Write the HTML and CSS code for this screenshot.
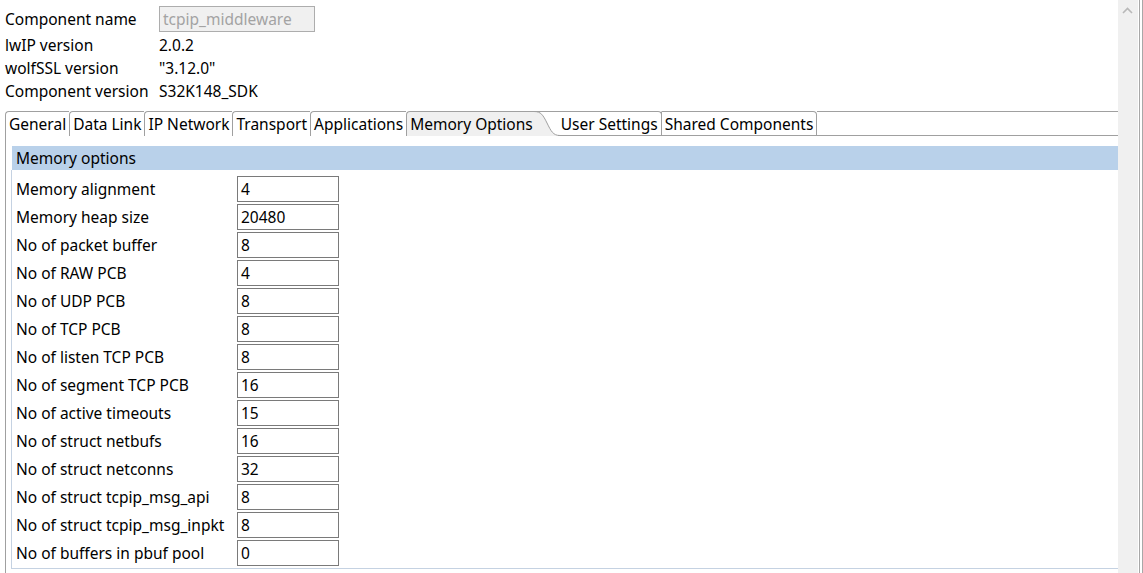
FILE: index.html
```html
<!DOCTYPE html>
<html>
<head>
<meta charset="utf-8">
<link rel="stylesheet" href="styles.css">
</head>
<body>
<div class="page">
  <div class="content">
    <div class="info">
      <div class="info-label">Component name</div>
      <div class="info-value"><div class="readonly">tcpip_middleware</div></div>
      <div class="info-label">lwIP version</div>
      <div class="info-value">2.0.2</div>
      <div class="info-label">wolfSSL version</div>
      <div class="info-value">"3.12.0"</div>
      <div class="info-label">Component version</div>
      <div class="info-value">S32K148_SDK</div>
    </div>
    <div class="tabs">
      <div class="tab tab-left">General</div>
      <div class="tab tab-left">Data Link</div>
      <div class="tab tab-left">IP Network</div>
      <div class="tab tab-left">Transport</div>
      <div class="tab tab-left">Applications</div>
      <div class="tab tab-selected">Memory Options</div>
      <svg class="tab-curve" width="29" height="25" viewBox="0 0 29 25"><path d="M0 0.5 H1 C8 0.5 10 4 14 12 C18 20 20 24.5 27 24.5 H29 V25 H0 Z" fill="#f0f0f0"/><path d="M0 0.5 H1 C8 0.5 10 4 14 12 C18 20 20 24.5 27 24.5 H29" fill="none" stroke="#a0a0a0" stroke-width="1"/></svg>
      <div class="tab tab-right tab-after-selected">User Settings</div>
      <div class="tab tab-right">Shared Components</div>
      <div class="tab-filler"></div>
    </div>
    <div class="panel">
      <div class="section">
        <div class="section-head">Memory options</div>
        <div class="section-body">
          <div class="field-label">Memory alignment</div><div class="field">4</div>
          <div class="field-label">Memory heap size</div><div class="field">20480</div>
          <div class="field-label">No of packet buffer</div><div class="field">8</div>
          <div class="field-label">No of RAW PCB</div><div class="field">4</div>
          <div class="field-label">No of UDP PCB</div><div class="field">8</div>
          <div class="field-label">No of TCP PCB</div><div class="field">8</div>
          <div class="field-label">No of listen TCP PCB</div><div class="field">8</div>
          <div class="field-label">No of segment TCP PCB</div><div class="field">16</div>
          <div class="field-label">No of active timeouts</div><div class="field">15</div>
          <div class="field-label">No of struct netbufs</div><div class="field">16</div>
          <div class="field-label">No of struct netconns</div><div class="field">32</div>
          <div class="field-label">No of struct tcpip_msg_api</div><div class="field">8</div>
          <div class="field-label">No of struct tcpip_msg_inpkt</div><div class="field">8</div>
          <div class="field-label">No of buffers in pbuf pool</div><div class="field">0</div>
        </div>
      </div>
    </div>
  </div>
  <div class="vscroll">
    <svg class="arrow-up" width="11" height="7" viewBox="0 0 11 7"><path d="M1 6 L5.5 1.5 L10 6" fill="none" stroke="#b8b8b8" stroke-width="1.6"/></svg>
  </div>
  <div class="edge"></div>
</div>
</body>
</html>
```

FILE: styles.css
```css
html, body {
  margin: 0;
  padding: 0;
  background: #ffffff;
}
body {
  font-family: "Noto Sans", "Open Sans", sans-serif;
  font-size: 15.5px;
  color: #000;
  overflow: hidden;
}
.page {
  display: flex;
  width: 1143px;
  height: 573px;
  overflow: hidden;
}
.content {
  width: 1118px;
  flex: none;
  overflow: hidden;
}
.vscroll {
  width: 20px;
  flex: none;
  background: #f0f0f0;
  display: flex;
  justify-content: center;
  padding-top: 7px;
  box-sizing: border-box;
}
.arrow-up {
  display: block;
  margin-left: -1px;
}
.edge {
  flex: none;
  box-sizing: border-box;
  border-left: 1px solid #a8a8a8;
  border-right: 1px solid #a8a8a8;
  margin-left: 1px;
  width: 4px;
}
.info {
  display: grid;
  grid-template-columns: 154px 1fr;
  grid-template-rows: 28px 23px 23px 23px;
  padding: 6px 0 0 5px;
  align-items: center;
}
.info-label, .info-value {
  line-height: 23px;
  white-space: nowrap;
}
.info-label:first-child {
  margin-top: -1px;
}
.readonly {
  width: 156px;
  height: 26px;
  box-sizing: border-box;
  border: 1px solid #adadad;
  background: #f0f0f0;
  color: #a3a3a3;
  padding: 0 3px;
  line-height: 24px;
  margin-top: -2px;
}
.tabs {
  display: flex;
  margin: 8px 0 0 5px;
  height: 25px;
  align-items: stretch;
}
.tab {
  box-sizing: border-box;
  border-top: 1px solid #a0a0a0;
  line-height: 24px;
  white-space: nowrap;
  padding: 0 3px 0 3px;
}
.tab-left {
  border-left: 1px solid #a0a0a0;
  border-top-left-radius: 4px;
}
.tab-selected {
  border-left: 1px solid #a0a0a0;
  border-top-left-radius: 4px;
  background: #f0f0f0;
  padding-right: 0;
}
.tab-curve {
  display: block;
  flex: none;
}
.tab-right {
  border-right: 1px solid #a0a0a0;
  border-bottom: 1px solid #a0a0a0;
  border-top-right-radius: 4px;
}
.tab-after-selected {
  margin-left: -4px;
  border-top-color: transparent;
  border-top-right-radius: 0;
  position: relative;
}
.tab-after-selected::after {
  content: "";
  position: absolute;
  left: -24px;
  right: -1px;
  top: -1px;
  height: 4px;
  border-top: 1px solid #a0a0a0;
  border-right: 1px solid #a0a0a0;
  border-top-right-radius: 4px;
}
.tab-filler {
  flex: 1;
  box-sizing: border-box;
  border-top: 1px solid #a0a0a0;
  border-bottom: 1px solid #a0a0a0;
}
.panel {
  margin-left: 5px;
  border-left: 1px solid #a0a0a0;
  padding: 10px 0 0 5px;
  height: 600px;
}
.section-head {
  margin-left: 1px;
  height: 24px;
  line-height: 24px;
  background: #b9d1ea;
  padding-left: 4px;
}
.section-body {
  display: grid;
  grid-template-columns: 221px 102px;
  grid-auto-rows: 26px;
  row-gap: 2px;
  padding: 6px 0 2px 4px;
  border-left: 1px solid #c5d2e2;
  border-bottom: 1px solid #c5d2e2;
}
.field-label {
  line-height: 26px;
  white-space: nowrap;
}
.field {
  box-sizing: border-box;
  border: 1px solid #7a7a7a;
  height: 26px;
  line-height: 24px;
  padding: 0 3px;
}
```
